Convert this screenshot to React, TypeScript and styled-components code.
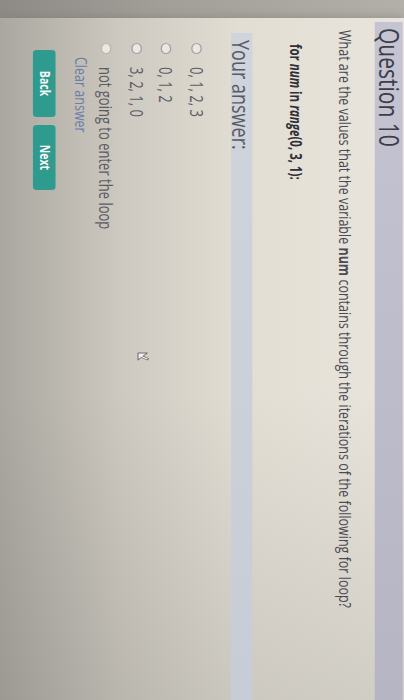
import React from "react";
import styled, { createGlobalStyle } from "styled-components";

// The reference is a phone photo of a quiz page, turned a quarter clockwise
// and slightly stretched across the reading direction. The page is laid out
// upright (700 wide) and the whole stage is turned and stretched once.

const GlobalStyle = createGlobalStyle`
    html, body {
        margin: 0;
        padding: 0;
        width: 404px;
        height: 700px;
        overflow: hidden;
        background: #a29f99;
    }
    #root {
        width: 404px;
        height: 700px;
    }
`;

const Stage = styled.div`
    width: 700px;
    height: 304px;
    display: flex;
    transform-origin: 0 0;
    transform: translateX(404px) rotate(90deg) scaleY(1.33);
    background: linear-gradient(to bottom, #b3b0aa 0%, #a29f99 60%, #8e8b86 100%);
    font-family: "Open Sans", "Noto Sans", sans-serif;
`;

const Page = styled.div`
    position: relative;
    flex: 1;
    margin-left: 18px;
    padding-top: 1px;
    display: flex;
    flex-direction: column;
    background:
        linear-gradient(to right, rgba(255, 255, 255, 0) 55%, rgba(70, 70, 70, 0.14) 100%),
        linear-gradient(to bottom, #e9e5dc 0%, #e2ded4 40%, #cdc9c0 70%, #aaa7a0 100%);
    box-shadow: -3px 0 6px rgba(120, 118, 112, 0.35);
`;

const Heading = styled.h1`
    margin: 0 0 0 4px;
    height: 21px;
    padding-left: 6px;
    font-size: 21px;
    line-height: 21px;
    font-weight: 400;
    color: #3d3c47;
    background: linear-gradient(to right, #c4c4d3, #b6b5c3);
`;

const Question = styled.p`
    margin: 15px 0 0 12px;
    font-size: 12.5px;
    line-height: 16px;
    color: #4b4a52;
`;

const Code = styled.p`
    margin: 21px 0 0 26px;
    font-size: 11.5px;
    line-height: 16px;
    font-weight: 700;
    color: #2f2f36;
`;

const AnswerBand = styled.div`
    margin: 24px 0 0 15px;
    height: 16px;
    padding-left: 7px;
    font-size: 18px;
    line-height: 16px;
    color: #5b5a62;
    background: linear-gradient(to right, #d0d4dc, #c8ccd6);
`;

const Options = styled.div`
    margin-top: 15px;
    display: flex;
    flex-direction: column;
`;

const Option = styled.label`
    display: flex;
    align-items: center;
    height: 22.5px;
    padding-left: 25px;
    font-size: 13px;
    color: #5d5c63;
`;

const Radio = styled.span<{ $faint?: boolean }>`
    flex: none;
    width: 11px;
    height: 8.3px;
    margin-right: 13px;
    box-sizing: border-box;
    border-radius: 50%;
    border: 1px solid ${(p) => (p.$faint ? "#b9b7b3" : "#a2a1a4")};
    background: #ebe8e2;
`;

const ClearLink = styled.a`
    display: block;
    margin: 1px 0 0 39px;
    font-size: 12.5px;
    line-height: 14px;
    color: #6b7ea6;
    text-decoration: none;
`;

const ButtonRow = styled.div`
    display: flex;
    gap: 8px;
    margin: 12px 0 0 32px;
`;

const NavButton = styled.button<{ $w: number }>`
    width: ${(p) => p.$w}px;
    height: 16.5px;
    padding: 0;
    border: none;
    border-radius: 3px;
    display: flex;
    align-items: center;
    justify-content: center;
    background: #2f9a8e;
    color: #f4f8f7;
    font-family: "Open Sans", "Noto Sans", sans-serif;
    font-size: 10.5px;
    font-weight: 700;
`;

const Pointer = styled.svg`
    position: absolute;
    left: 334px;
    top: 191px;
    width: 9px;
    height: 10px;
`;

const options = ["0, 1, 2, 3", "0, 1, 2", "3, 2, 1, 0", "not going to enter the loop"];

export default function App(): JSX.Element {
    return (
        <>
            <GlobalStyle />
            <Stage>
                <Page>
                    <Heading>Question 10</Heading>
                    <Question>
                        What are the values that the variable <b>num</b> contains through the iterations of the following for loop?
                    </Question>
                    <Code>
                        for <i>num</i> in <i>range</i>(0, 3, 1):
                    </Code>
                    <AnswerBand>Your answer:</AnswerBand>
                    <Options>
                        {options.map((text, i) => (
                            <Option key={text}>
                                <Radio $faint={i === options.length - 1} />
                                {text}
                            </Option>
                        ))}
                    </Options>
                    <ClearLink href="#">Clear answer</ClearLink>
                    <ButtonRow>
                        <NavButton $w={67}>Back</NavButton>
                        <NavButton $w={65}>Next</NavButton>
                    </ButtonRow>
                    <Pointer viewBox="0 0 9 10">
                        <path d="M1 9 L8 9 L5.5 6.5 L8 2 L6.5 1 L4.2 5.3 L1 2 Z" fill="#f3f1ec" stroke="#6e6d70" strokeWidth="0.8" strokeLinejoin="round" />
                    </Pointer>
                </Page>
            </Stage>
        </>
    );
}
